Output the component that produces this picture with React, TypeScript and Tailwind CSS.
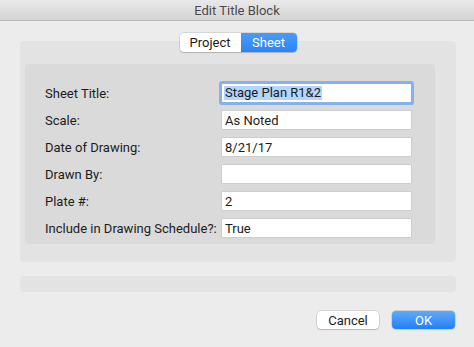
import React from "react";

const rows = [
  { label: "Sheet Title:", value: "Stage Plan R1&2", focused: true },
  { label: "Scale:", value: "As Noted" },
  { label: "Date of Drawing:", value: "8/21/17" },
  { label: "Drawn By:", value: "" },
  { label: "Plate #:", value: "2" },
  { label: "Include in Drawing Schedule?:", value: "True" },
];

export default function App() {
  return (
    <div
      className="w-[474px] h-[347px] bg-[#ececec] flex flex-col text-[13px] text-[#222] overflow-hidden"
      style={{ fontFamily: 'Roboto, "Liberation Sans", Arial, sans-serif' }}
    >
      {/* title bar */}
      <div className="h-[21px] shrink-0 flex items-center justify-center bg-gradient-to-b from-[#e9e9e9] to-[#d4d4d4] border-b border-[#b9b9b9] text-[#4a4a4a] leading-none">
        Edit Title Block
      </div>

      <div className="flex flex-col pl-[20px] pr-[18px]">
        {/* segmented control */}
        <div className="relative z-10 mt-[12px] self-center flex h-[19px] rounded-[4px] bg-white shadow-[0_0_0_0.5px_rgba(0,0,0,0.18),0_1px_1px_rgba(0,0,0,0.15)] overflow-hidden leading-none">
          <div className="w-[61px] flex items-center justify-center text-[#1a1a1a]">Project</div>
          <div className="w-[56px] flex items-center justify-center text-white bg-gradient-to-b from-[#4a9bf8] to-[#2d83f5]">
            Sheet
          </div>
        </div>

        {/* outer box */}
        <div className="-mt-[11px] h-[221px] rounded-[4px] bg-[#e3e3e3] pt-[23px] pl-[5px] pr-[21px]">
          <div className="h-[180px] rounded-[4px] bg-[#dadada] pt-[20px] pl-[20px] flex flex-col gap-[9px]">
            {rows.map((r) => (
              <div key={r.label} className="flex items-center h-[18px]">
                <div className="w-[177px] text-[#1c1c1c] leading-none">{r.label}</div>
                <div
                  className={
                    r.focused
                      ? "w-[189px] h-[18px] bg-white flex items-center pl-[2px] ring-[3px] ring-[#86b1ea] rounded-[1px]"
                      : "w-[189px] h-[18px] bg-white flex items-center pl-[3px] shadow-[0_0_0_0.5px_rgba(0,0,0,0.12)]"
                  }
                >
                  {r.focused ? (
                    <span className="bg-[#b4d5fe] px-[1px] leading-[14px] text-[#1c1c1c]">{r.value}</span>
                  ) : (
                    <span className="leading-none text-[#1c1c1c]">{r.value}</span>
                  )}
                </div>
              </div>
            ))}
          </div>
        </div>

        {/* empty bar */}
        <div className="mt-[14px] h-[16px] rounded-[4px] bg-[#e3e3e3]" />

        {/* buttons */}
        <div className="mt-[19px] flex justify-end gap-[13px] pr-[1px]">
          <button className="w-[62px] h-[18px] rounded-[4px] bg-white text-[#1c1c1c] leading-none shadow-[0_0_0_0.5px_rgba(0,0,0,0.2),0_1px_1px_rgba(0,0,0,0.15)]">
            Cancel
          </button>
          <button className="w-[63px] h-[18px] rounded-[4px] bg-gradient-to-b from-[#5eaaf9] to-[#1f7ff5] text-white leading-none shadow-[0_0_0_0.5px_rgba(0,60,160,0.3)]">
            OK
          </button>
        </div>
      </div>
    </div>
  );
}
